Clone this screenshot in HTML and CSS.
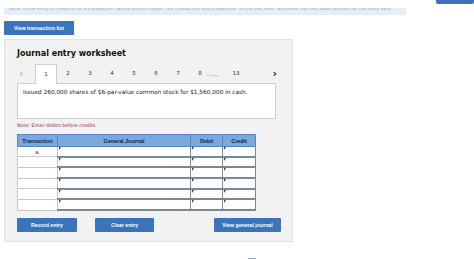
FILE: index.html
```html
<!DOCTYPE html>
<html lang="en">
<head>
    <meta charset="UTF-8">
    <title>Journal entry worksheet</title>
    <link rel="stylesheet" href="styles.css">
</head>
<body>
    <div class="top">
        <div class="banner"><span>Note: In the entry to respond for a transaction, debits before credits. The transaction entry responds "in the first field" and enter the first debit amount for the entry field.</span></div>
        <div class="stub"></div>
    </div>
    <button class="btn list-btn">View transaction list</button>

    <div class="panel">
        <h2>Journal entry worksheet</h2>
        <div class="tabs">
            <span class="arrow">&lsaquo;</span>
            <span class="tab active">1</span>
            <span class="tab">2</span>
            <span class="tab">3</span>
            <span class="tab">4</span>
            <span class="tab">5</span>
            <span class="tab">6</span>
            <span class="tab">7</span>
            <span class="tab">8</span>
            <span class="dots">.....</span>
            <span class="tab last">13</span>
            <span class="arrow next">&rsaquo;</span>
        </div>
        <div class="question">Issued 260,000 shares of $6-par-value common stock for $1,560,000 in cash.</div>
        <div class="note">Note: Enter debits before credits.</div>

        <table class="journal">
            <tr>
                <th class="c-tr">Transaction</th>
                <th class="c-gj">General Journal</th>
                <th class="c-dr">Debit</th>
                <th class="c-cr">Credit</th>
            </tr>
            <tr><td class="tr">a.</td><td class="in"></td><td class="in"></td><td class="in"></td></tr>
            <tr><td class="tr"></td><td class="in"></td><td class="in"></td><td class="in"></td></tr>
            <tr><td class="tr"></td><td class="in"></td><td class="in"></td><td class="in"></td></tr>
            <tr><td class="tr"></td><td class="in"></td><td class="in"></td><td class="in"></td></tr>
            <tr><td class="tr"></td><td class="in"></td><td class="in"></td><td class="in"></td></tr>
            <tr><td class="tr"></td><td class="in"></td><td class="in"></td><td class="in"></td></tr>
        </table>

        <div class="actions">
            <button class="btn record">Record entry</button>
            <button class="btn clear">Clear entry</button>
            <button class="btn view">View general journal</button>
        </div>
    </div>
    <div class="pager"></div>
</body>
</html>
```

FILE: styles.css
```css
body {
    margin: 0;
    font-family: 'DejaVu Sans', Verdana, sans-serif;
    background-color: #fff;
    color: #222;
    overflow: hidden;
}
.top {
    display: flex;
    align-items: flex-start;
    padding-left: 4px;
    height: 15px;
}
.banner {
    margin-top: 8px;
    width: 402px;
    height: 7px;
    background-color: #e4eefa;
    overflow: hidden;
    font-size: 4.5px;
    line-height: 6px;
    color: #9aa3b0;
    white-space: nowrap;
}
.banner span {
    display: block;
    margin-top: -2px;
    padding-left: 5px;
}
.stub {
    margin-left: 30px;
    width: 38px;
    height: 4px;
    background-color: #3c73b8;
    border-radius: 0 0 2px 2px;
}
.btn {
    font-family: 'Liberation Sans', Arial, sans-serif;
    font-weight: bold;
    font-size: 5.2px;
    color: #fff;
    background-color: #3b74ba;
    border: none;
    border-radius: 1px;
    padding: 0;
    display: block;
}
.list-btn {
    margin: 6px 0 0 4px;
    width: 70px;
    height: 14px;
}
.panel {
    margin: 4px 0 0 4px;
    width: 259px;
    height: 172px;
    padding: 9px 16px 20px 12px;
    background-color: #f2f2f2;
    border: 1px solid #e2e2e2;
}
h2 {
    margin: 0;
    font-size: 8px;
    font-weight: bold;
    color: #111;
    height: 15px;
}
.tabs {
    display: flex;
    align-items: center;
    height: 19px;
    font-size: 5.6px;
    color: #333;
}
.arrow {
    width: 16px;
    padding-left: 2px;
    font-size: 11px;
    color: #aaa;
    line-height: 19px;
}
.arrow.next {
    margin-left: auto;
    margin-right: -1px;
    width: auto;
    color: #222;
    font-weight: bold;
}
.tab {
    width: 22px;
    text-align: center;
    height: 19px;
    line-height: 18px;
    box-sizing: border-box;
}
.tab.active {
    background-color: #fff;
    border: 1px solid #cfcfcf;
    border-bottom: none;
    position: relative;
    z-index: 1;
    margin-bottom: -1px;
    height: 20px;
}
.dots {
    width: 18px;
    letter-spacing: 0.6px;
    margin-left: -4px;
    padding-top: 1px;
}
.tab.last {
    width: 18px;
    margin-left: 2px;
}
.question {
    height: 34px;
    background-color: #fff;
    border: 1px solid #cfcfcf;
    padding-left: 5px;
    font-size: 5.8px;
    line-height: 16px;
    color: #222;
    white-space: nowrap;
}
.note {
    margin-top: 4px;
    height: 11px;
    font-size: 4.8px;
    color: #9b2b30;
}
.journal {
    border-collapse: collapse;
    width: 239px;
    font-family: 'Liberation Sans', Arial, sans-serif;
}
.journal th {
    height: 11px;
    padding: 0;
    background-color: #7aa7dc;
    color: #10284a;
    font-size: 5.4px;
    font-weight: bold;
    border: 1px solid #5b86bd;
}
.c-tr { width: 39px; }
.c-gj { width: 133px; }
.c-dr { width: 31px; }
.c-cr { width: 32px; }
.journal td {
    height: 8.7px;
    padding: 0;
    background-color: #fff;
    font-size: 5.5px;
}
.journal td.tr {
    border: 1px solid #c8c8c8;
    text-align: center;
    color: #333;
}
.journal td.in {
    border: 1px solid #7c8797;
    border-bottom-width: 2px;
    position: relative;
}
.journal td.in::before {
    content: "";
    position: absolute;
    left: 1px;
    top: 0;
    border-top: 3px solid #23467a;
    border-right: 2px solid transparent;
}
.actions {
    display: flex;
    margin-top: 7px;
}
.actions .btn {
    height: 14px;
}
.record {
    width: 60px;
}
.clear {
    margin-left: 18px;
    width: 59px;
}
.view {
    margin-left: auto;
    margin-right: -5px;
    width: 67px;
}
.pager {
    margin: 16px 0 0 248px;
    width: 8px;
    height: 2px;
    background-color: #8ba9d6;
}
```
